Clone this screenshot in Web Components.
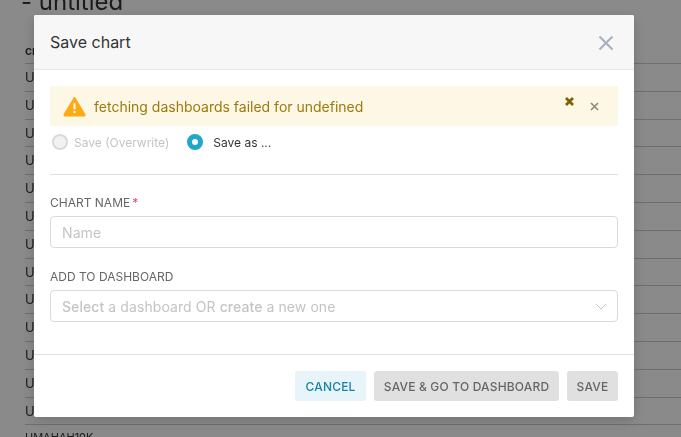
<!DOCTYPE html>
<html>
<head>
<meta charset="utf-8">
<title>Save chart</title>
<style>
	html, body { margin: 0; height: 100%; overflow: hidden; background: #fff; }
	body { font-family: Inter, "Liberation Sans", sans-serif; }
</style>
</head>
<body>
<chart-list></chart-list>
<modal-backdrop></modal-backdrop>
<save-modal></save-modal>

<script>
class ChartList extends HTMLElement {
	constructor() {
		super();
		this.shadow = this.attachShadow({ mode: "open" });
	}
	connectedCallback() {
		let rows = "";
		for (let i = 0; i < 13; i++) {
			rows += `<div class="row">U</div>`;
		}
		this.shadow.innerHTML = `
			<style>
				:host { display: block; height: 437px; overflow: hidden; padding: 0 0 0 21px; color: #333; will-change: opacity; }
				h1 { margin: -14px 0 0; font-size: 24px; line-height: 32px; font-weight: 400; color: #333; }
				.head { margin: 14px 0 0 4px; height: 32px; line-height: 37px; font-size: 12px; font-weight: 600; border-bottom: 1px solid #ccc; box-sizing: border-box; }
				.row { margin-left: 4px; height: 27.8px; line-height: 27px; font-size: 13px; border-bottom: 1px solid #ccc; box-sizing: border-box; }
				.last { margin-left: 4px; font-size: 11px; line-height: 24px; }
			</style>
			<h1>- untitled</h1>
			<div class="head">cr</div>
			`+rows+`
			<div class="last">UMAHAH10K</div>
		`;
	}
}
customElements.define('chart-list', ChartList);

class ModalBackdrop extends HTMLElement {
	constructor() {
		super();
		this.shadow = this.attachShadow({ mode: "open" });
		this.shadow.innerHTML = `
			<style>
				:host { display: block; position: fixed; inset: 0; background: rgba(0,0,0,.46); }
			</style>
		`;
	}
}
customElements.define('modal-backdrop', ModalBackdrop);

class SaveAlert extends HTMLElement {
	constructor() {
		super();
		this.shadow = this.attachShadow({ mode: "open" });
		this.shadow.innerHTML = `
			<style>
				:host { display: flex; align-items: center; height: 40px; box-sizing: border-box; padding: 0 19px 0 13px; background: #fdf7e5; border-radius: 2px; color: #9c7a0f; font-size: 14px; }
				.warn { width: 23px; height: 21px; margin-right: 8px; flex: none; }
				.msg { flex: 1; }
				.x1 { width: 11px; height: 11px; margin: -10px 15px 0 0; }
				.x2 { width: 9px; height: 9px; }
			</style>
			<svg class="warn" viewBox="0 0 23 21">
				<path d="M11.5 1.6 L21.6 18.4 Q22 19.8 20.6 19.8 H2.4 Q1 19.8 1.4 18.4 Z" fill="#fcab15" stroke="#fcab15" stroke-width="1.6" stroke-linejoin="round"/>
				<rect x="10.5" y="7" width="2" height="6.6" rx="1" fill="#fff"/>
				<circle cx="11.5" cy="16" r="1.2" fill="#fff"/>
			</svg>
			<span class="msg"><slot></slot></span>
			<svg class="x1" viewBox="0 0 11 11"><path d="M2 2 L9 9 M9 2 L2 9" stroke="#7f6200" stroke-width="2.8" fill="none"/></svg>
			<svg class="x2" viewBox="0 0 9 9"><path d="M1 1 L8 8 M8 1 L1 8" stroke="#8f8b80" stroke-width="1.7" fill="none"/></svg>
		`;
	}
}
customElements.define('save-alert', SaveAlert);

class SaveRadio extends HTMLElement {
	constructor() {
		super();
		this.shadow = this.attachShadow({ mode: "open" });
		this.shadow.innerHTML = `
			<style>
				:host { display: inline-flex; align-items: center; font-size: 12px; color: #333; }
				:host([disabled]) { color: #c4c4c4; margin-left: 2px; }
				.dot { width: 16px; height: 16px; box-sizing: border-box; margin-right: 10px; border-radius: 50%; border: 5px solid #20a7c9; background: #fff; }
				:host([disabled]) .dot { border: 2px solid #d9d9d9; background: #f2f2f2; margin-right: 6px; }
			</style>
			<span class="dot"></span><slot></slot>
		`;
	}
}
customElements.define('save-radio', SaveRadio);

class FormField extends HTMLElement {
	constructor() {
		super();
		this.shadow = this.attachShadow({ mode: "open" });
	}
	connectedCallback() {
		let star = this.hasAttribute("required") ? `<span class="star">*</span>` : "";
		this.shadow.innerHTML = `
			<style>
				:host { display: block; }
				label { display: block; height: 21px; line-height: 16px; font-size: 12px; color: #666; }
				.star { color: #e8476a; margin-left: 2px; }
				.box { display: flex; align-items: center; justify-content: space-between; height: 32px; box-sizing: border-box; padding: 0 10px 0 11px; border: 1px solid #d9d9e0; border-radius: 4px; font-size: 14px; color: #c4c4c4; letter-spacing: .08px; }
				svg { width: 12px; height: 7px; flex: none; }
				::slotted(b) { font-weight: 500; }
			</style>
			<label>`+this.getAttribute("label")+star+`</label>
			<div class="box"><span><slot></slot></span>`+(this.hasAttribute("select") ? `<svg viewBox="0 0 12 7"><path d="M.8.8 6 6 11.2.8" stroke="#c4c4c4" stroke-width="1" fill="none"/></svg>` : "")+`</div>
		`;
	}
}
customElements.define('form-field', FormField);

class ModalButton extends HTMLElement {
	constructor() {
		super();
		this.shadow = this.attachShadow({ mode: "open" });
		this.shadow.innerHTML = `
			<style>
				:host { display: inline-flex; align-items: center; justify-content: center; height: 30px; padding: 0 10px; border-radius: 3px; background: #e0e0e0; color: #666; font-size: 12px; font-weight: 500; letter-spacing: .015em; white-space: nowrap; }
				:host([primary]) { background: #e7f5fa; color: #1a85a0; }
			</style>
			<slot></slot>
		`;
	}
}
customElements.define('modal-button', ModalButton);

class SaveModal extends HTMLElement {
	constructor() {
		super();
		this.shadow = this.attachShadow({ mode: "open" });
		this.shadow.innerHTML = `
			<style>
				:host { display: block; position: fixed; left: 34px; top: 15px; width: 600px; height: 402px; background: #fff; border-radius: 2px; color: #333; box-shadow: 0 4px 14px rgba(0,0,0,.18); }
				header { display: flex; align-items: center; justify-content: space-between; height: 55px; box-sizing: border-box; padding: 0 20px 0 16px; background: #f7f7f7; border-bottom: 1px solid #e8e8e8; font-size: 16px; border-radius: 2px 2px 0 0; }
				header svg { width: 16px; height: 16px; margin-top: 2px; }
				.body { padding: 16px 16px 0; }
				.radios { display: flex; gap: 18px; height: 32px; align-items: center; }
				hr { border: 0; border-top: 1px solid #e0e0e0; margin: 0; }
				.body hr { margin: 16px 0 20px; }
				form-field + form-field { margin-top: 21px; }
				footer { margin-top: 32px; border-top: 1px solid #e0e0e0; display: flex; justify-content: flex-end; gap: 8px; padding: 16px 16px 0; }
				.w-cancel { width: 51px; }
				.w-go { width: 165px; }
				.w-save { width: 31px; }
			</style>
			<header>
				<span>Save chart</span>
				<svg viewBox="0 0 16 16"><path d="M1.5 1.5 L14.5 14.5 M14.5 1.5 L1.5 14.5" stroke="#a9b0c4" stroke-width="2.2" fill="none"/></svg>
			</header>
			<div class="body">
				<save-alert>fetching dashboards failed for undefined</save-alert>
				<div class="radios">
					<save-radio disabled>Save (Overwrite)</save-radio>
					<save-radio>Save as ...</save-radio>
				</div>
				<hr>
				<form-field label="CHART NAME" required>Name</form-field>
				<form-field label="ADD TO DASHBOARD" select><b>Select</b> a dashboard OR <b>create</b> a new one</form-field>
			</div>
			<footer>
				<modal-button primary class="w-cancel">CANCEL</modal-button>
				<modal-button class="w-go">SAVE &amp; GO TO DASHBOARD</modal-button>
				<modal-button class="w-save">SAVE</modal-button>
			</footer>
		`;
	}
}
customElements.define('save-modal', SaveModal);
</script>
</body>
</html>
